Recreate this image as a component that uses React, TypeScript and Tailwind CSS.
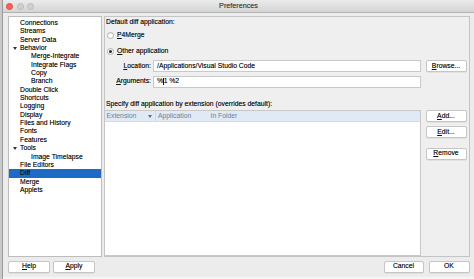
import React from 'react'

type NavItem = { label: string; level: 0 | 1; expanded?: boolean }

const navItems: NavItem[] = [
  { label: 'Connections', level: 0 },
  { label: 'Streams', level: 0 },
  { label: 'Server Data', level: 0 },
  { label: 'Behavior', level: 0, expanded: true },
  { label: 'Merge-Integrate', level: 1 },
  { label: 'Integrate Flags', level: 1 },
  { label: 'Copy', level: 1 },
  { label: 'Branch', level: 1 },
  { label: 'Double Click', level: 0 },
  { label: 'Shortcuts', level: 0 },
  { label: 'Logging', level: 0 },
  { label: 'Display', level: 0 },
  { label: 'Files and History', level: 0 },
  { label: 'Fonts', level: 0 },
  { label: 'Features', level: 0 },
  { label: 'Tools', level: 0, expanded: true },
  { label: 'Image Timelapse', level: 1 },
  { label: 'File Editors', level: 0 },
  { label: 'Diff', level: 0 },
  { label: 'Merge', level: 0 },
  { label: 'Applets', level: 0 },
]

// first letter underlined, like a Qt mnemonic
function Mnemonic({ text }: { text: string }) {
  return (
    <>
      <span className="underline underline-offset-[1px] decoration-[0.5px]">{text[0]}</span>
      {text.slice(1)}
    </>
  )
}

function Button({ label, className = '' }: { label: string; className?: string }) {
  return (
    <div
      className={`h-[12px] flex items-center justify-center bg-white border border-[#c6c6c6] rounded-[2px] shadow-[0_0.5px_0.5px_rgba(0,0,0,0.12)] text-[#111] leading-none ${className}`}
    >
      <Mnemonic text={label} />
    </div>
  )
}

function Radio({ checked, label }: { checked?: boolean; label: string }) {
  return (
    <div className="flex items-center h-[9px] pl-[2px]">
      <span className="w-[7px] h-[7px] rounded-full border border-[#b0b0b0] bg-white flex items-center justify-center shadow-[inset_0_0.5px_0.5px_rgba(0,0,0,0.1)]">
        {checked && <span className="w-[3px] h-[3px] rounded-full bg-[#2a2a2a]" />}
      </span>
      <span className="ml-[3px]">
        <Mnemonic text={label} />
      </span>
    </div>
  )
}

function FieldRow({ label, value, button, caret }: { label: string; value: string; button?: string; caret?: boolean }) {
  return (
    <div className="flex items-center h-[12px]">
      <div className="w-[46px] text-right">
        <Mnemonic text={label} />
      </div>
      <div className="ml-[2px] w-[268px] h-[12px] bg-white border border-[#c9c9c9] flex items-center pl-[3px] leading-none">
        {caret ? (
          <>
            {value.slice(0, 1)}
            <span className="inline-block w-[0.6px] h-[7px] bg-[#111]" />
            {value.slice(1)}
          </>
        ) : (
          value
        )}
      </div>
      {button && <Button label={button} className="ml-[4.5px] w-[41px]" />}
    </div>
  )
}

export default function App() {
  return (
    <div className="w-[474px] h-[279px] flex bg-[#f5f5f5] overflow-hidden text-[6.8px] text-[#111] font-['Liberation_Sans',Arial,sans-serif] [text-shadow:0_0_0.4px_rgba(0,0,0,0.55)]">
      {/* desktop edge behind the window */}
      <div className="w-[3px] h-full bg-[#c9c9c9] border-r border-[#9a9a9a]" />

      <div className="flex-1 h-[277px] flex flex-col bg-[#ececec]">
        {/* Title bar */}
        <div className="relative h-[13px] shrink-0 flex items-center bg-gradient-to-b from-[#ebebeb] to-[#d4d4d4] border-b border-[#b3b3b3]">
          <div className="flex items-center gap-[3.5px] pl-[3px]">
            <span className="w-[7px] h-[7px] rounded-full bg-[#fc5f57] border border-[#de4a44]" />
            <span className="w-[7px] h-[7px] rounded-full bg-[#d0d0d0] border border-[#bababa]" />
            <span className="w-[7px] h-[7px] rounded-full bg-[#d0d0d0] border border-[#bababa]" />
          </div>
          <div className="absolute inset-0 flex items-center justify-center text-[7.2px] text-[#4a4a4a]">Preferences</div>
        </div>

        {/* Body */}
        <div className="flex h-[244px] pt-[3px] pl-[5px] pr-[4px]">
          {/* Sidebar tree */}
          <div className="w-[94px] h-full bg-white border border-[#bcbcbc] pt-[2px]">
            {navItems.map((item) => {
              const selected = item.label === 'Diff'
              return (
                <div
                  key={item.label}
                  className={`relative h-[8.35px] leading-[8.35px] whitespace-nowrap ${item.level === 1 ? 'pl-[22px]' : 'pl-[11px]'} ${selected ? 'bg-[#1d6bc6]' : ''}`}
                >
                  {item.expanded && (
                    <svg className="absolute left-[4px] top-[3px]" width="4" height="3" viewBox="0 0 4 3">
                      <path d="M0 0 L4 0 L2 3 Z" fill="#333" />
                    </svg>
                  )}
                  {item.label}
                </div>
              )
            })}
          </div>

          {/* Right panel */}
          <div className="ml-[2px] flex-1 h-full border border-[#c4c4c4] bg-[#efefef] flex flex-col">
            <div className="h-[8px] leading-[8px] mt-[1px] pl-[1px]">Default diff application:</div>
            <div className="mt-[5px]">
              <Radio label="P4Merge" />
            </div>
            <div className="mt-[7px]">
              <Radio label="Other application" checked />
            </div>
            <div className="mt-[4px]">
              <FieldRow label="Location:" value="/Applications/Visual Studio Code" button="Browse..." />
            </div>
            <div className="mt-[3.5px]">
              <FieldRow label="Arguments:" value="%1 %2" caret />
            </div>
            <div className="mt-[12.5px] h-[8px] leading-[8px] pl-[1px]">Specify diff application by extension (overrides default):</div>

            <div className="flex flex-1 mt-[2px]">
              {/* Extension table */}
              <div className="w-[316px] h-full bg-white border border-[#c8c8c8] border-l-0">
                <div className="h-[11px] flex items-center bg-[#e0eaf6] border-b border-[#d3dcea] text-[#6f7f94] leading-none [text-shadow:none]">
                  <div className="w-[51px] flex items-center justify-between pl-[1.5px] pr-[3px] border-r border-[#cfd9e8] h-full">
                    <span>Extension</span>
                    <svg width="4" height="3" viewBox="0 0 4 3">
                      <path d="M0 0 L4 0 L2 3 Z" fill="#5b6b80" />
                    </svg>
                  </div>
                  <div className="w-[52px] pl-[2px]">Application</div>
                  <div className="pl-[2.5px]">In Folder</div>
                </div>
              </div>

              {/* Table buttons */}
              <div className="ml-[4.5px] w-[41px] flex flex-col">
                <Button label="Add..." />
                <Button label="Edit..." className="mt-[4px]" />
                <Button label="Remove" className="mt-[9.5px]" />
              </div>
            </div>
          </div>
        </div>

        {/* Footer */}
        <div className="flex items-start pt-[3.5px] pl-[5px] pr-[4.5px] flex-1">
          <Button label="Help" className="w-[42px]" />
          <Button label="Apply" className="ml-[3px] w-[42px]" />
          <div className="flex-1" />
          <div className="w-[40px] h-[12px] flex items-center justify-center bg-white border border-[#c6c6c6] rounded-[2px] shadow-[0_0.5px_0.5px_rgba(0,0,0,0.12)] leading-none">
            Cancel
          </div>
          <div className="ml-[5px] w-[41px] h-[12px] flex items-center justify-center bg-white border border-[#c6c6c6] rounded-[2px] shadow-[0_0.5px_0.5px_rgba(0,0,0,0.12)] leading-none">
            OK
          </div>
        </div>
      </div>
    </div>
  )
}
